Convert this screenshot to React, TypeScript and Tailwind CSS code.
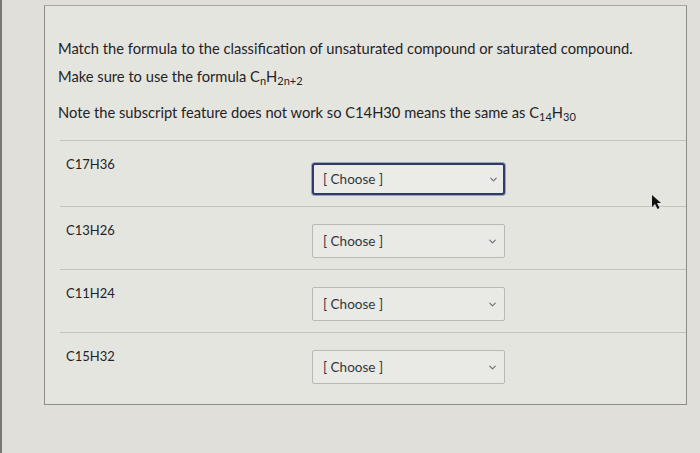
import { ChevronDown } from 'lucide-react';

const rows = ['C17H36', 'C13H26', 'C11H24', 'C15H32'];

function ChooseSelect({ active }: { active?: boolean }) {
  return (
    <div
      className={
        active
          ? 'flex h-[32px] w-[193px] items-center justify-between rounded-[3px] border-2 border-[#2e3c66] bg-[#ebebe8] pl-[9px] pr-[4px] shadow-[0_0_0_1px_#9aa3bd]'
          : 'flex h-[34px] w-[193px] items-center justify-between rounded-[2px] border border-[#b9b9b3] bg-[#e9e9e5] pl-[10px] pr-[6px]'
      }
    >
      <span className="text-[13.5px] text-[#33373c]">[ Choose ]</span>
      <ChevronDown className="h-[11px] w-[11px] text-[#6b6f74]" strokeWidth={2.5} />
    </div>
  );
}

export default function App() {
  return (
    <div
      className="relative flex h-[453px] w-[700px] overflow-hidden bg-[#e0dfd9] text-[#1f2326]"
      style={{ fontFamily: 'Lato, "Open Sans", sans-serif' }}
    >
      <div className="w-[2px] bg-[#7a7873]" />

      {/* question panel */}
      <div className="ml-[42px] mt-[5px] flex h-[400px] w-[643px] flex-col border border-[#8d8c86] border-t-[#a9a8a2] bg-[#e5e5e0]">
        <div className="px-[13px] pt-[32px] text-[14.7px]">
          <p className="leading-[20px]">
            Match the formula to the classification of unsaturated compound or saturated compound.
          </p>
          <p className="mt-[8px] leading-[20px]">
            Make sure to use the formula C<sub className="text-[11px]">n</sub>H
            <sub className="text-[11px]">2n+2</sub>
          </p>
          <p className="mt-[16px] leading-[20px]">
            Note the subscript feature does not work so C14H30 means the same as C
            <sub className="text-[11px]">14</sub>H<sub className="text-[11px]">30</sub>
          </p>
        </div>

        <div className="mt-[18px] flex flex-col">
          {rows.map((formula, i) => (
            <div
              key={formula}
              className={
                i === 0
                  ? 'ml-[15px] flex h-[66px] border-t border-[#c3c3bd]'
                  : 'ml-[15px] flex h-[63px] border-t border-[#c3c3bd]'
              }
            >
              <div className="w-[252px] pl-[6px] pt-[14px] text-[13px]">{formula}</div>
              <div className={i === 0 ? 'pt-[22px]' : 'pt-[17px]'}>
                <ChooseSelect active={i === 0} />
              </div>
            </div>
          ))}
        </div>
      </div>

      {/* mouse pointer */}
      <svg
        className="absolute left-[651px] top-[194px]"
        width="12"
        height="16"
        viewBox="0 0 12 16"
      >
        <path d="M1 1 L1 13 L4 10 L6.5 15 L8.5 14 L6 9 L10 9 Z" fill="#111" />
      </svg>
    </div>
  );
}
